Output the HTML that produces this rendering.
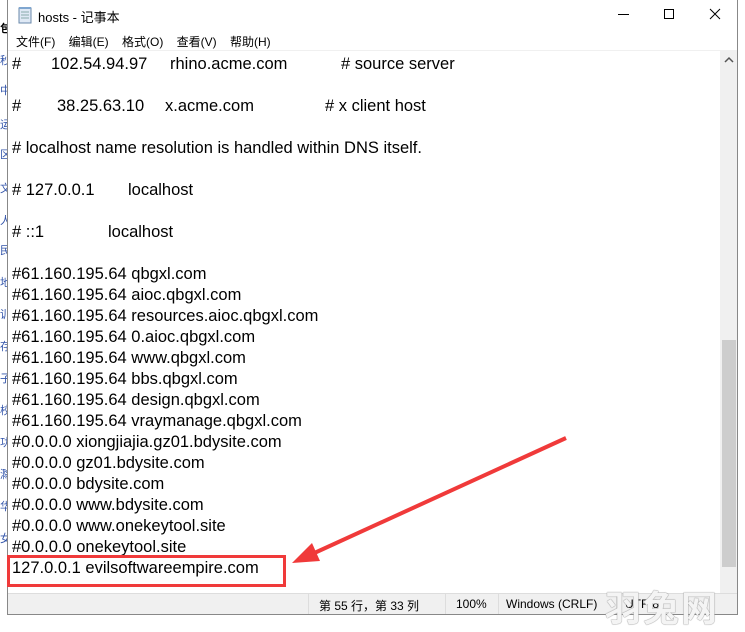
<!DOCTYPE html><html><head><meta charset="utf-8"><style>
*{margin:0;padding:0;box-sizing:border-box}
body{width:745px;height:623px;background:#fff;position:relative;overflow:hidden;font-family:"Liberation Sans","Noto Sans CJK SC",sans-serif}
.win{position:absolute;left:7px;top:0;width:731px;height:615px;border:1px solid #888;border-top:none;background:#fff}
.t{position:absolute;white-space:pre;font-size:16.5px;color:#000;left:12px}
.s{position:absolute;white-space:pre;font-size:16.5px;color:#000}
.side{position:absolute;left:0;font-size:11px;color:#3355aa}
</style></head><body>
<div class="side" style="top:52px">秒</div><div class="side" style="top:82px">中</div><div class="side" style="top:116px">运</div><div class="side" style="top:146px">区</div><div class="side" style="top:180px">文</div><div class="side" style="top:212px">人</div><div class="side" style="top:242px">民</div><div class="side" style="top:274px">地</div><div class="side" style="top:306px">训</div><div class="side" style="top:338px">存</div><div class="side" style="top:370px">子</div><div class="side" style="top:402px">校</div><div class="side" style="top:434px">功</div><div class="side" style="top:466px">滁</div><div class="side" style="top:498px">华</div><div class="side" style="top:530px">女</div>
<div style="position:absolute;left:0;top:20px;font-size:11px;font-weight:bold">包</div>
<div class="win">
<svg style="position:absolute;left:9px;top:6px" width="16" height="18"><rect x="2" y="2" width="12" height="15" fill="#dfe9f5" stroke="#6a88aa"/><line x1="4" y1="6" x2="12" y2="6" stroke="#8aa"/><line x1="4" y1="9" x2="12" y2="9" stroke="#8aa"/><line x1="4" y1="12" x2="12" y2="12" stroke="#8aa"/><rect x="2" y="1" width="12" height="2" fill="#7fa6d0"/></svg>
<div style="position:absolute;left:30px;top:7px;font-size:13px">hosts - 记事本</div>
<div style="position:absolute;left:610px;top:14px;width:11px;height:1px;background:#000"></div>
<div style="position:absolute;left:656px;top:9px;width:10px;height:10px;border:1px solid #000"></div>
<svg style="position:absolute;left:701px;top:8px" width="12" height="12"><path d="M1 1L11 11M11 1L1 11" stroke="#000" stroke-width="1"/></svg>
<div style="position:absolute;left:8px;top:33px;font-size:12px;word-spacing:0">文件(F)&nbsp;&nbsp;&nbsp;&nbsp;编辑(E)&nbsp;&nbsp;&nbsp;&nbsp;格式(O)&nbsp;&nbsp;&nbsp;&nbsp;查看(V)&nbsp;&nbsp;&nbsp;&nbsp;帮助(H)</div>
<div style="position:absolute;left:0;top:50px;width:729px;height:1px;background:#f0f0f0"></div>
<div style="position:absolute;left:712px;top:50px;width:17px;height:543px;background:#f0f0f0"></div>
<div style="position:absolute;left:714px;top:340px;width:14px;height:227px;background:#cdcdcd"></div>
<svg style="position:absolute;left:716px;top:56px" width="10" height="8"><path d="M1 6L5 2L9 6" stroke="#555" stroke-width="1.5" fill="none"/></svg>
<div style="position:absolute;left:0;top:593px;width:729px;height:21px;background:#f0f0f0;border-top:1px solid #ddd;font-size:12px">
<div style="position:absolute;left:300px;top:0;height:20px;border-left:1px solid #ddd"></div>
<div style="position:absolute;left:437px;top:0;height:20px;border-left:1px solid #ddd"></div>
<div style="position:absolute;left:490px;top:0;height:20px;border-left:1px solid #ddd"></div>
<div style="position:absolute;left:608px;top:0;height:20px;border-left:1px solid #ddd"></div>
<span style="position:absolute;left:311px;top:3px">第 55 行，第 33 列</span>
<span style="position:absolute;left:448px;top:3px">100%</span>
<span style="position:absolute;left:498px;top:3px">Windows (CRLF)</span>
<span style="position:absolute;left:617px;top:3px">UTF-8</span>
</div>
</div>
<div class="s" style="top:55px;left:12px">#</div><div class="s" style="top:55px;left:51px">102.54.94.97</div><div class="s" style="top:55px;left:170px">rhino.acme.com</div><div class="s" style="top:55px;left:341px"># source server</div>
<div class="s" style="top:97px;left:12px">#</div><div class="s" style="top:97px;left:57px">38.25.63.10</div><div class="s" style="top:97px;left:165px">x.acme.com</div><div class="s" style="top:97px;left:325px"># x client host</div>
<div class="t" style="top:139px"># localhost name resolution is handled within DNS itself.</div>
<div class="s" style="top:181px;left:12px"># 127.0.0.1</div><div class="s" style="top:181px;left:128px">localhost</div>
<div class="s" style="top:223px;left:12px"># ::1</div><div class="s" style="top:223px;left:108px">localhost</div>
<div class="t" style="top:265px">#61.160.195.64 qbgxl.com</div>
<div class="t" style="top:286px">#61.160.195.64 aioc.qbgxl.com</div>
<div class="t" style="top:307px">#61.160.195.64 resources.aioc.qbgxl.com</div>
<div class="t" style="top:328px">#61.160.195.64 0.aioc.qbgxl.com</div>
<div class="t" style="top:349px">#61.160.195.64 www.qbgxl.com</div>
<div class="t" style="top:370px">#61.160.195.64 bbs.qbgxl.com</div>
<div class="t" style="top:391px">#61.160.195.64 design.qbgxl.com</div>
<div class="t" style="top:412px">#61.160.195.64 vraymanage.qbgxl.com</div>
<div class="t" style="top:433px">#0.0.0.0 xiongjiajia.gz01.bdysite.com</div>
<div class="t" style="top:454px">#0.0.0.0 gz01.bdysite.com</div>
<div class="t" style="top:475px">#0.0.0.0 bdysite.com</div>
<div class="t" style="top:496px">#0.0.0.0 www.bdysite.com</div>
<div class="t" style="top:517px">#0.0.0.0 www.onekeytool.site</div>
<div class="t" style="top:538px">#0.0.0.0 onekeytool.site</div>
<div class="t" style="top:559px">127.0.0.1 evilsoftwareempire.com</div>
<div style="position:absolute;left:7px;top:555px;width:279px;height:32px;border:3px solid #f03a3a"></div>
<svg style="position:absolute;left:0;top:0" width="745" height="623"><path d="M566 438L310 555" stroke="#f03a3a" stroke-width="4"/><path d="M292 563L312 543L320 561Z" fill="#f03a3a"/></svg>
<div style="position:absolute;left:605px;top:580px;font-size:36px;font-weight:bold;color:#f4f4f4;text-shadow:0 0 1px #888,0 0 1px #888;letter-spacing:2px">羽兔网</div>
</body></html>
